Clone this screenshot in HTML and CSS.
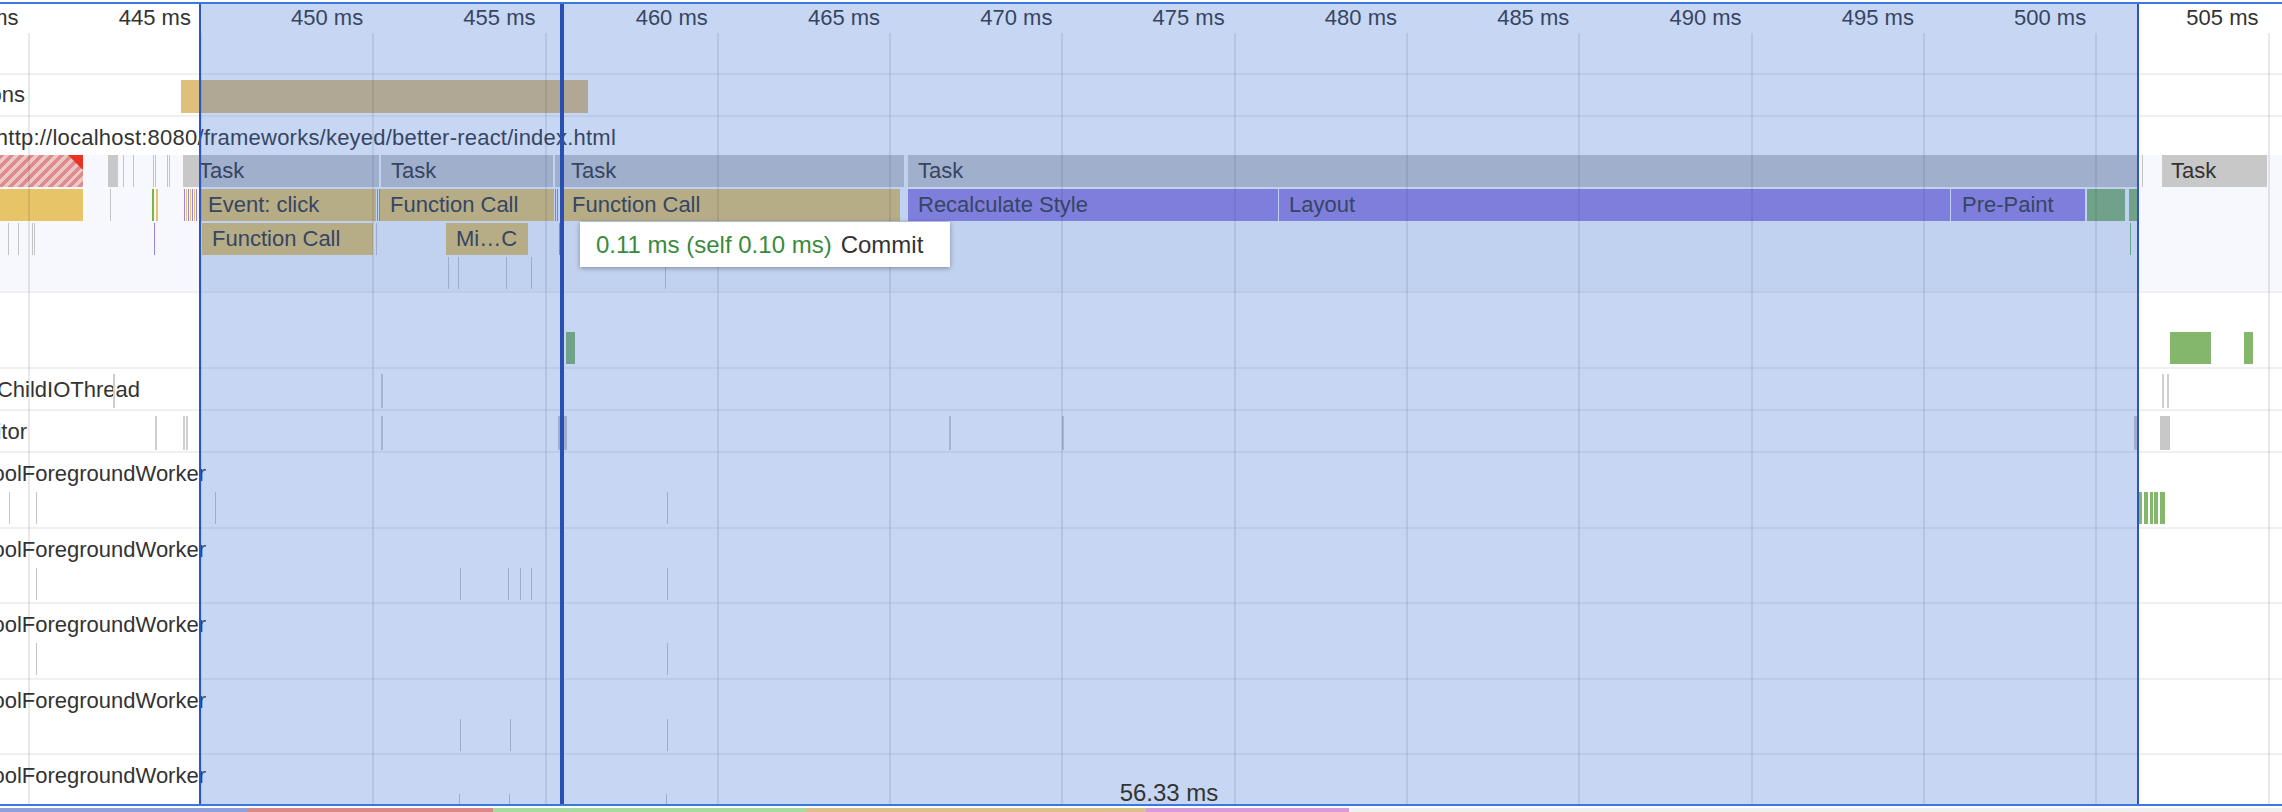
FILE: index.html
```html
<!DOCTYPE html>
<html>
<head>
<meta charset="utf-8">
<title>Performance timeline</title>
<link rel="stylesheet" href="styles.css">
</head>
<body>
<div class="page">
  <div class="frame">
    <div class="ruler">
      <span class="tick" style="left:18.6px">440 ms</span>
      <span class="tick" style="left:190.9px">445 ms</span>
      <span class="tick" style="left:363.2px">450 ms</span>
      <span class="tick" style="left:535.5px">455 ms</span>
      <span class="tick" style="left:707.8px">460 ms</span>
      <span class="tick" style="left:880.1px">465 ms</span>
      <span class="tick" style="left:1052.4px">470 ms</span>
      <span class="tick" style="left:1224.7px">475 ms</span>
      <span class="tick" style="left:1397px">480 ms</span>
      <span class="tick" style="left:1569.3px">485 ms</span>
      <span class="tick" style="left:1741.6px">490 ms</span>
      <span class="tick" style="left:1913.9px">495 ms</span>
      <span class="tick" style="left:2086.2px">500 ms</span>
      <span class="tick" style="left:2258.5px">505 ms</span>
    </div>

    <div class="track t-anim">
      <div class="lbl lbl-anim"><span>Animations</span></div>
      <div class="animbar" style="left:181px;width:407px"></div>
    </div>

    <div class="track t-main">
      <div class="lbl lbl-url"><span>http://localhost:8080/frameworks/keyed/better-react/index.html</span></div>
      <div class="flame">
        <!-- row 0 -->
        <div class="b r0 long"></div>
        <div class="b r0 task" style="left:108px;width:5px"></div>
        <div class="ln r0" style="left:123px"></div>
        <div class="ln r0" style="left:133px"></div>
        <div class="ln r0" style="left:153px"></div>
        <div class="ln r0" style="left:155px"></div>
        <div class="ln r0" style="left:167px"></div>
        <div class="ln r0" style="left:169px"></div>
        <div class="b r0 task" style="left:183px;width:3px"></div>
        <div class="b r0 task" style="left:187px;width:192px;padding-left:12px">Task</div>
        <div class="b r0 task" style="left:381px;width:172px">Task</div>
        <div class="b r0 task" style="left:555px;width:349px;padding-left:16px">Task</div>
        <div class="b r0 task" style="left:908px;width:1230px">Task</div>
        <div class="ln r0" style="left:2142px"></div>
        <div class="b r0 task" style="left:2162px;width:105px;padding-left:9px">Task</div>

        <!-- row 1 -->
        <div class="b r1 js" style="left:0;width:83px"></div>
        <div class="ln r1" style="left:110px"></div>
        <div class="ln r1 g2" style="left:152px"></div>
        <div class="ln r1 y2" style="left:156px"></div>
        <div class="ln r1 p" style="left:184px"></div>
        <div class="ln r1 y" style="left:186px"></div>
        <div class="ln r1 p" style="left:188px"></div>
        <div class="ln r1 y" style="left:190px"></div>
        <div class="ln r1 p" style="left:192px"></div>
        <div class="ln r1 y" style="left:194px"></div>
        <div class="ln r1 p" style="left:196px"></div>
        <div class="b r1 js" style="left:200px;width:176px;padding-left:8px">Event: click</div>
        <div class="ln r1 p" style="left:377px"></div>
        <div class="ln r1 p" style="left:379px"></div>
        <div class="b r1 js" style="left:380px;width:174px">Function Call</div>
        <div class="ln r1 p" style="left:555px"></div>
        <div class="ln r1 p" style="left:557px"></div>
        <div class="b r1 js" style="left:560px;width:340px;padding-left:12px">Function Call</div>
        <div class="b r1 rend" style="left:908px;width:370px">Recalculate Style</div>
        <div class="b r1 rend" style="left:1279px;width:671px">Layout</div>
        <div class="b r1 rend" style="left:1951px;width:134px;padding-left:11px">Pre-Paint</div>
        <div class="b r1 paint" style="left:2087px;width:38px"></div>
        <div class="b r1 paint" style="left:2129px;width:10px"></div>

        <!-- row 2 -->
        <div class="ln r2" style="left:8px"></div>
        <div class="ln r2" style="left:18px"></div>
        <div class="ln r2" style="left:32px"></div>
        <div class="ln r2" style="left:34px"></div>
        <div class="ln r2 p" style="left:154px"></div>
        <div class="b r2 js" style="left:202px;width:171px">Function Call</div>
        <div class="ln r2" style="left:376px"></div>
        <div class="b r2 js" style="left:446px;width:82px">Mi…C</div>
        <div class="ln r2 g" style="left:559px"></div>
        <div class="ln r2 g" style="left:2130px"></div>

        <!-- row 3 -->
        <div class="ln r3" style="left:448px"></div>
        <div class="ln r3" style="left:458px"></div>
        <div class="ln r3" style="left:506px"></div>
        <div class="ln r3" style="left:531px"></div>
        <div class="ln r3" style="left:665px"></div>
      </div>
    </div>

    <div class="track t-gpu">
      <div class="k lane39 green" style="left:566px;width:9px"></div>
      <div class="k lane39 green" style="left:2170px;width:41px"></div>
      <div class="k lane39 green" style="left:2244px;width:9px"></div>
    </div>

    <div class="track t-row">
      <div class="lbl lbl-io"><span>Chrome_ChildIOThread</span></div>
      <div class="k lane5 gline" style="left:113px"></div>
      <div class="k lane5 gline" style="left:381px"></div>
      <div class="k lane5 gline" style="left:2162px"></div>
      <div class="k lane5 gline" style="left:2167px"></div>
    </div>

    <div class="track t-row">
      <div class="lbl lbl-comp"><span>Compositor</span></div>
      <div class="k lane5 gline" style="left:155px"></div>
      <div class="k lane5 gline" style="left:183px"></div>
      <div class="k lane5 gline" style="left:186px"></div>
      <div class="k lane5 gline" style="left:381px"></div>
      <div class="k lane5 gray" style="left:558px;width:9px"></div>
      <div class="k lane5 gline" style="left:949px"></div>
      <div class="k lane5 gline" style="left:1062px"></div>
      <div class="k lane5 gray" style="left:2134px;width:4px"></div>
      <div class="k lane5 gray" style="left:2160px;width:10px"></div>
    </div>

    <div class="track t-worker">
      <div class="lbl lbl-worker"><span>ThreadPoolForegroundWorker</span></div>
      <div class="k lane39 wline" style="left:9px"></div>
      <div class="k lane39 wline" style="left:36px"></div>
      <div class="k lane39 wline" style="left:215px"></div>
      <div class="k lane39 wline" style="left:667px"></div>
      <div class="k lane39 green" style="left:2139px;width:3px"></div>
      <div class="k lane39 green" style="left:2144px;width:4px"></div>
      <div class="k lane39 green" style="left:2150px;width:3px"></div>
      <div class="k lane39 green" style="left:2154px;width:4px"></div>
      <div class="k lane39 green" style="left:2160px;width:5px"></div>
    </div>

    <div class="track t-worker">
      <div class="lbl lbl-worker"><span>ThreadPoolForegroundWorker</span></div>
      <div class="k lane39 wline" style="left:36px"></div>
      <div class="k lane39 wline" style="left:460px"></div>
      <div class="k lane39 wline" style="left:508px"></div>
      <div class="k lane39 wline" style="left:520px"></div>
      <div class="k lane39 wline" style="left:531px"></div>
      <div class="k lane39 wline" style="left:667px"></div>
    </div>

    <div class="track t-worker">
      <div class="lbl lbl-worker"><span>ThreadPoolForegroundWorker</span></div>
      <div class="k lane39 wline" style="left:36px"></div>
      <div class="k lane39 wline" style="left:667px"></div>
    </div>

    <div class="track t-worker">
      <div class="lbl lbl-worker"><span>ThreadPoolForegroundWorker</span></div>
      <div class="k lane39 wline" style="left:460px"></div>
      <div class="k lane39 wline" style="left:510px"></div>
      <div class="k lane39 wline" style="left:667px"></div>
    </div>

    <div class="track t-worker">
      <div class="lbl lbl-worker"><span>ThreadPoolForegroundWorker</span></div>
      <div class="k lane39 wline" style="left:459px"></div>
      <div class="k lane39 wline" style="left:509px"></div>
      <div class="k lane39 wline" style="left:666px"></div>
    </div>

    <div class="grid">
      <div class="gl" style="left:27.6px"></div>
      <div class="gl" style="left:199.9px"></div>
      <div class="gl" style="left:372.2px"></div>
      <div class="gl" style="left:544.5px"></div>
      <div class="gl" style="left:716.8px"></div>
      <div class="gl" style="left:889.1px"></div>
      <div class="gl" style="left:1061.4px"></div>
      <div class="gl" style="left:1233.7px"></div>
      <div class="gl" style="left:1406px"></div>
      <div class="gl" style="left:1578.3px"></div>
      <div class="gl" style="left:1750.6px"></div>
      <div class="gl" style="left:1922.9px"></div>
      <div class="gl" style="left:2095.2px"></div>
      <div class="gl" style="left:2267.5px"></div>
    </div>

    <div class="sel">
      <div class="total">56.33 ms</div>
    </div>
    <div class="cursor"></div>
    <div class="tip"><span class="dur">0.11 ms (self 0.10 ms)</span><span>Commit</span></div>
  </div>
  <div class="strip">
    <div class="seg s1"></div>
    <div class="seg s2"></div>
    <div class="seg s3"></div>
    <div class="seg s4"></div>
    <div class="seg s5"></div>
  </div>
</div>
</body>
</html>
```
FILE: styles.css
```css
* { box-sizing: border-box; }
html, body { margin: 0; padding: 0; }
body {
  width: 2282px;
  height: 812px;
  overflow: hidden;
  background: #fff;
  font-family: "Liberation Sans", Arial, sans-serif;
  font-size: 22px;
  color: #333;
}
.page { padding-top: 2px; }

.frame {
  position: relative;
  height: 804px;
  border-top: 2px solid #3b77dc;
  border-bottom: 2px solid #3b77dc;
  overflow: hidden;
  display: flex;
  flex-direction: column;
}

/* time ruler */
.ruler {
  position: relative;
  flex: none;
  height: 71px;
  border-bottom: 2px solid #f0f0f0;
}
.tick {
  position: absolute;
  top: 3px;
  line-height: 22px;
  white-space: nowrap;
  transform: translateX(-100%);
  color: #333;
}

/* tracks */
.track {
  position: relative;
  flex: none;
  border-bottom: 2px solid #f0f0f0;
}
.t-anim { height: 42px; }
.t-main { height: 176px; }
.t-gpu { height: 76px; }
.t-row { height: 42px; }
.t-worker { height: 75.5px; }

.lbl {
  display: flex;
  justify-content: flex-end;
  white-space: nowrap;
  height: 40px;
  line-height: 40px;
  color: #333;
}
.lbl span { flex: none; }
.lbl-anim { width: 25px; }
.lbl-url {
  width: 616px;
  height: 38px;
  padding-top: 4px;
  line-height: 34px;
  letter-spacing: 0.22px;
}
.lbl-io { width: 140px; padding-top: 1px; }
.lbl-comp { width: 27px; padding-top: 1px; }
.lbl-worker {
  width: 206px;
  height: 38px;
  padding-top: 4px;
  line-height: 34px;
}

.animbar {
  position: absolute;
  top: 5px;
  height: 33px;
  background: #dfbf7b;
}

/* main thread flame chart */
.flame {
  position: relative;
  height: 136px;
  background: #f7f8fd;
}
.b {
  position: absolute;
  height: 32px;
  line-height: 32px;
  padding-left: 10px;
  overflow: hidden;
  white-space: nowrap;
  color: #333;
}
.r0 { top: 0; }
.r1 { top: 34px; }
.r2 { top: 68px; }
.r3 { top: 102px; }
.task { background: #c8c8c8; }
.js { background: #e8c468; }
.rend { background: #9a84e2; }
.paint { background: #84b66c; }
.long {
  left: 0;
  width: 83px;
  background: repeating-linear-gradient(135deg, #dc8c8c 0 3.5px, #efc6c6 3.5px 7px);
}
.long::after {
  content: "";
  position: absolute;
  top: 0;
  right: 0;
  width: 15px;
  height: 15px;
  background: #ec3322;
  clip-path: polygon(0 0, 100% 0, 100% 100%);
}
.ln {
  position: absolute;
  width: 1px;
  height: 32px;
  background: #c4c4c4;
}
.ln.p { background: #9a84e2; }
.ln.y { background: #e8c468; }
.ln.g { background: #84b66c; }
.ln.g2 { width: 2px; background: #7cb342; }
.ln.y2 { width: 2px; background: #e8c468; }

/* other threads */
.k { position: absolute; }
.lane5 { top: 5px; height: 34px; }
.lane39 { top: 39px; height: 32px; }
.green { background: #84b66c; }
.gray { background: #c8c8c8; }
.gline { width: 2px; background: #cfcfcf; }
.wline { width: 1px; background: #c4c4c4; }

/* overlays */
.grid {
  position: absolute;
  left: 0;
  right: 0;
  top: 29px;
  bottom: 0;
  z-index: 2;
  pointer-events: none;
}
.gl {
  position: absolute;
  top: 0;
  bottom: 0;
  width: 2px;
  background: rgba(0, 0, 0, 0.09);
}
.sel {
  position: absolute;
  top: 0;
  bottom: 0;
  left: 199px;
  width: 1940px;
  background: rgba(62, 115, 210, 0.29);
  border-left: 2px solid #2b55c0;
  border-right: 2px solid #2b55c0;
  z-index: 3;
}
.total {
  position: absolute;
  left: 0;
  right: 0;
  top: 777px;
  font-size: 24px;
  line-height: 24px;
  text-align: center;
  color: #333;
}
.cursor {
  position: absolute;
  top: 0;
  bottom: 0;
  left: 560px;
  width: 4px;
  background: #2a4fb3;
  z-index: 4;
}
.tip {
  position: absolute;
  left: 580px;
  top: 218px;
  width: 370px;
  height: 45px;
  padding-left: 16px;
  background: #fff;
  box-shadow: 0 1px 5px rgba(0, 0, 0, 0.35);
  font-size: 24px;
  line-height: 45px;
  white-space: nowrap;
  color: #333;
  z-index: 5;
}
.tip .dur { color: #398a3c; margin-right: 9px; }

/* overview strip */
.strip {
  display: flex;
  height: 4px;
  margin-top: 2px;
  background: #f0f0f0;
}
.seg { flex: none; height: 4px; }
.s1 { width: 247px; background: #8fa0dc; }
.s2 { width: 246px; background: #d98a87; }
.s3 { width: 313px; background: #a5dba0; }
.s4 { width: 340px; background: #dcbf8d; }
.s5 { width: 203px; background: #d89ad8; }
```
